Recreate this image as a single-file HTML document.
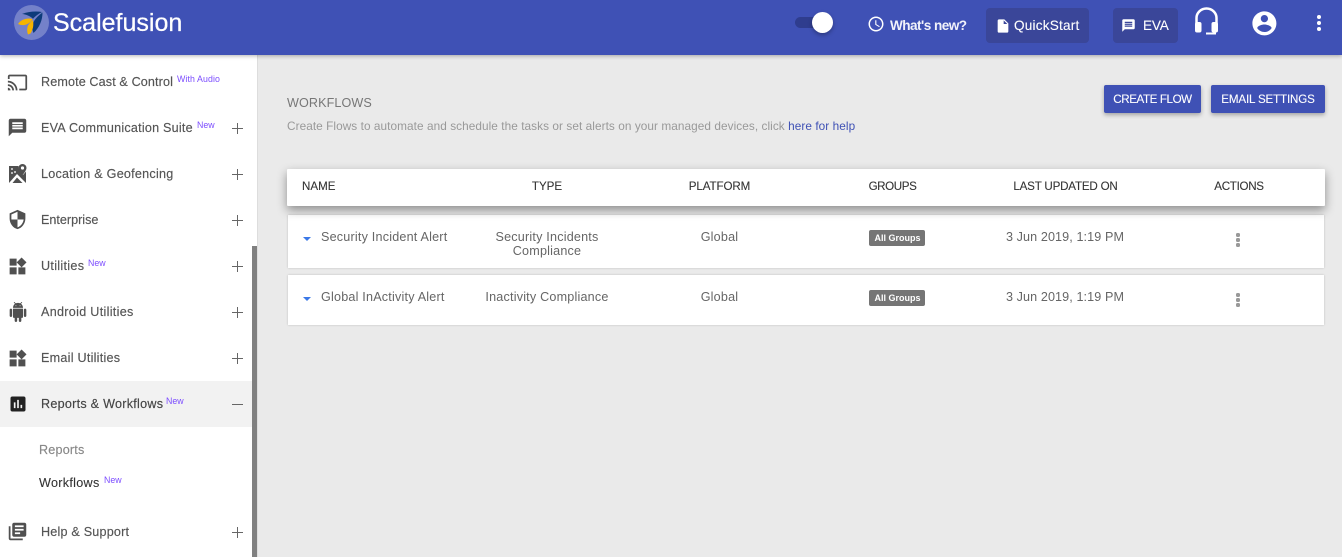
<!DOCTYPE html>
<html lang="en">
<head>
<meta charset="utf-8">
<title>Scalefusion Workflows</title>
<style>
*{box-sizing:border-box}
html,body{margin:0;padding:0}
body{width:1342px;height:557px;overflow:hidden;position:relative;background:#eaeaea;font-family:"Liberation Sans",sans-serif;color:#555}
.t{position:absolute;white-space:nowrap;line-height:16px}
svg{position:absolute;display:block}
#top{position:absolute;left:0;top:0;width:1342px;height:55px;background:#3f51b5;box-shadow:0 1px 4px rgba(0,0,0,.3);z-index:5}
#side{position:absolute;left:0;top:55px;width:258px;height:502px;background:#fff;border-right:1px solid #ddd}
#track{position:absolute;left:252px;top:246px;width:5px;height:311px;background:#808080;z-index:3}
.m{font-size:12.6px;color:#555;left:41px;-webkit-text-stroke:.15px #555}
.n{font-size:8.8px;color:#7c4dff}
.p{position:absolute;left:231.5px;width:11px;height:11px}
.p:before{content:"";position:absolute;left:0;top:5px;width:11px;height:1px;background:#666}
.p:after{content:"";position:absolute;left:5px;top:0;width:1px;height:11px;background:#666}
.p.min:after{display:none}
.dark{position:absolute;background:#3a4699;border-radius:4px}
.btn{position:absolute;top:85px;height:28px;background:#3f51b5;color:#fff;border-radius:2px;box-shadow:0 2px 4px rgba(0,0,0,.3);font-size:11.6px;line-height:29px;text-align:center;-webkit-text-stroke:.1px #fff}
.row{position:absolute;left:288px;width:1036px;background:#fff;box-shadow:0 0 2px rgba(0,0,0,.2)}
.h{font-size:11.6px;color:#333;top:179px;-webkit-text-stroke:.1px #333}
.c{font-size:12.6px;color:#666;text-align:center;letter-spacing:.2px}
.b{position:absolute;left:869px;width:56px;height:16px;padding-left:1px;background:#757575;border-radius:2px;color:#fff;font-size:9px;font-weight:700;line-height:16px;text-align:center}
.dot{position:absolute;left:1236px;width:4px;height:4px;border-radius:1.5px;background:#999}
.tri{position:absolute;left:303px;width:0;height:0;border-left:4.5px solid transparent;border-right:4.5px solid transparent;border-top:4px solid #3b78e7}
.i{fill:#505050}
</style>
</head>
<body>

<div id="side"></div>
<div style="position:absolute;left:0;top:381px;width:252px;height:46px;background:#f2f2f2"></div>
<div id="track"></div>

<div class="t m" style="top:74px;letter-spacing:.12px">Remote Cast &amp; Control</div>
<div class="t n" style="left:177px;top:71px;letter-spacing:.1px">With Audio</div>
<div class="t m" style="top:120px;letter-spacing:.22px">EVA Communication Suite</div>
<div class="t n" style="left:197px;top:117px">New</div>
<div class="t m" style="top:166px;letter-spacing:.24px">Location &amp; Geofencing</div>
<div class="t m" style="top:212px">Enterprise</div>
<div class="t m" style="top:258px;letter-spacing:.3px">Utilities</div>
<div class="t n" style="left:88px;top:255px">New</div>
<div class="t m" style="top:304px;letter-spacing:.3px">Android Utilities</div>
<div class="t m" style="top:350px;letter-spacing:.25px">Email Utilities</div>
<div class="t m" style="top:396px;color:#444;letter-spacing:.26px;-webkit-text-stroke:.15px #444">Reports &amp; Workflows</div>
<div class="t n" style="left:166px;top:393px">New</div>
<div class="t" style="left:39px;top:442px;font-size:12.6px;color:#888;letter-spacing:.2px;-webkit-text-stroke:.15px #888">Reports</div>
<div class="t" style="left:39px;top:475px;font-size:12.6px;color:#333;letter-spacing:.3px;-webkit-text-stroke:.1px #333">Workflows</div>
<div class="t n" style="left:104px;top:472px">New</div>
<div class="t m" style="top:524px;letter-spacing:.2px">Help &amp; Support</div>

<div class="p" style="top:123px"></div>
<div class="p" style="top:169px"></div>
<div class="p" style="top:215px"></div>
<div class="p" style="top:261px"></div>
<div class="p" style="top:307px"></div>
<div class="p" style="top:353px"></div>
<div class="p min" style="top:399px"></div>
<div class="p" style="top:527px"></div>

<!-- sidebar icons -->
<svg style="left:6.5px;top:71.5px" width="21" height="21" viewBox="0 0 24 24"><path class="i" d="M21 3H3c-1.100 0-2 .9-2 2v3h2V5h18v14h-7v2h7c1.100 0 2-.9 2-2V5c0-1.100-.9-2-2-2zM1 18v3h3c0-1.660-1.340-3-3-3zm0-4v2c2.760 0 5 2.240 5 5h2c0-3.870-3.130-7-7-7zm0-4v2c4.970 0 9 4.030 9 9h2c0-6.080-4.930-11-11-11z"/></svg>
<svg style="left:7px;top:116.500px" width="21" height="21" viewBox="0 0 24 24"><path class="i" d="M20 2H4c-1.100 0-1.990.9-1.990 2L2 22l4-4h14c1.100 0 2-.9 2-2V4c0-1.100-.9-2-2-2zm-2 12H6v-2h12v2zm0-3H6V9h12v2zm0-3H6V6h12v2z"/></svg>
<svg style="left:8px;top:164px" width="19" height="19" viewBox="0 0 19 19"><path class="i" d="M1 2h9.500a5 5 0 0 0 .8 3.500L15 11l3-3.500V19H1z"/><path fill="#fff" d="M1 19l8-9 9 9h-3.500L9 13.500 4.500 19z"/><path fill="#bbb" d="M3 4h2v2H3zM6 7h2v2H6zM3 8h2v2H3z"/><path class="i" d="M14.500 0A4 4 0 0 1 18.500 4c0 2.500-4 7-4 7s-4-4.500-4-7a4 4 0 0 1 4-4z"/><circle cx="14.500" cy="4" r="1.600" fill="#fff"/></svg>
<svg style="left:7px;top:209px" width="21" height="21" viewBox="0 0 24 24"><path class="i" d="M12 1L3 5v6c0 5.550 3.840 10.740 9 12 5.160-1.260 9-6.450 9-12V5l-9-4zm0 10.990h7c-.53 4.120-3.280 7.790-7 8.940V12H5V6.300l7-3.110v8.800z"/></svg>
<svg style="left:6.500px;top:255.500px" width="21" height="21" viewBox="0 0 24 24"><path class="i" d="M13 13v8h8v-8h-8zM3 21h8v-8H3v8zM3 3v8h8V3H3zm13.660-1.310L11 7.340 16.660 13l5.660-5.660-5.660-5.650z"/></svg>
<svg style="left:7.500px;top:301.500px" width="20" height="20" viewBox="0 0 24 24"><path class="i" d="M6 18c0 .55.45 1 1 1h1v3.500c0 .83.67 1.500 1.500 1.500s1.500-.67 1.500-1.500V19h2v3.500c0 .83.67 1.500 1.500 1.500s1.500-.67 1.500-1.500V19h1c.55 0 1-.45 1-1V8H6v10zM3.500 8C2.670 8 2 8.670 2 9.500v7c0 .83.67 1.500 1.500 1.500S5 17.330 5 16.500v-7C5 8.670 4.330 8 3.500 8zm17 0c-.83 0-1.500.67-1.500 1.500v7c0 .83.67 1.500 1.500 1.500s1.500-.67 1.500-1.500v-7c0-.83-.67-1.500-1.500-1.500zm-4.970-5.840l1.300-1.300c.2-.2.2-.51 0-.71-.2-.2-.51-.2-.71 0l-1.480 1.480C13.850 1.230 12.950 1 12 1c-.96 0-1.860.23-2.660.63L7.850.15c-.2-.2-.51-.2-.71 0-.2.2-.2.51 0 .71l1.310 1.310C6.970 3.260 6 5.010 6 7h12c0-1.990-.97-3.750-2.470-4.840zM10 5H9V4h1v1zm5 0h-1V4h1v1z"/></svg>
<svg style="left:6.500px;top:347.500px" width="21" height="21" viewBox="0 0 24 24"><path class="i" d="M13 13v8h8v-8h-8zM3 21h8v-8H3v8zM3 3v8h8V3H3zm13.660-1.310L11 7.340 16.660 13l5.660-5.660-5.660-5.650z"/></svg>
<svg style="left:7.500px;top:393.500px" width="20" height="20" viewBox="0 0 24 24"><path fill="#222" d="M19 3H5c-1.100 0-2 .9-2 2v14c0 1.100.9 2 2 2h14c1.100 0 2-.9 2-2V5c0-1.100-.9-2-2-2zM9 17H7v-7h2v7zm4 0h-2V7h2v10zm4 0h-2v-4h2v4z"/></svg>
<svg style="left:6.750px;top:521px" width="21" height="21" viewBox="0 0 24 24"><path class="i" d="M4 6H2v14c0 1.100.9 2 2 2h14v-2H4V6zm16-4H8c-1.100 0-2 .9-2 2v12c0 1.100.9 2 2 2h12c1.100 0 2-.9 2-2V4c0-1.100-.9-2-2-2zm-1 9H9V9h10v2zm-4 4H9v-2h6v2zm4-8H9V5h10v2z"/></svg>

<!-- top bar -->
<div id="top">
  <svg style="left:14px;top:5px" width="35" height="35" viewBox="0 0 35 35"><circle cx="17.500" cy="17.500" r="17.500" fill="#7481c9"/><path fill="#0d3b7a" d="M8 9C14 6.500 22 6 28 7c-3.500 1.800-6.500 4-9 6.800C16 11 12 9.300 8 9z"/><path fill="#0d3b7a" d="M28.500 7.500c0 7.500-3 15-9 20.500-1.600-3.500-1.600-7.500 0-11 2-3.800 5.500-7 9-9.500z"/><path fill="#f5b400" d="M4 19c3-4.500 9-6.500 14.500-5-2.200 4.500-8 8-14.500 5z"/><path fill="#f5b400" d="M18.800 15c1.200 4.500.3 9.500-2.300 13.500l-2.500 1c-1-2.500-1.200-6 0-9 1.200-2 3-4 4.800-5.500z"/></svg>
  <div class="t" style="left:53px;top:8px;font-size:25px;line-height:30px;color:#fff;-webkit-text-stroke:.25px #fff">Scalefusion</div>

  <div style="position:absolute;left:795px;top:17px;width:30px;height:11px;border-radius:6px;background:#2f3d8e"></div>
  <div style="position:absolute;left:812px;top:12px;width:21px;height:21px;border-radius:50%;background:#fff;box-shadow:0 2px 4px rgba(0,0,0,.3)"></div>

  <svg style="left:866.500px;top:14.500px" width="18" height="18" viewBox="0 0 24 24"><path fill="#fff" d="M11.990 2C6.470 2 2 6.480 2 12s4.470 10 9.990 10C17.520 22 22 17.520 22 12S17.520 2 11.990 2zM12 20c-4.420 0-8-3.580-8-8s3.580-8 8-8 8 3.580 8 8-3.580 8-8 8zm.5-13H11v6l5.250 3.150.75-1.230-4.500-2.670z"/></svg>
  <div class="t" style="left:890px;top:18px;font-size:13.600px;font-weight:700;color:#f1f2fa;letter-spacing:-.55px">What's new?</div>

  <div class="dark" style="left:986px;top:8px;width:103px;height:35px"></div>
  <svg style="left:994.500px;top:17.500px" width="16" height="16" viewBox="0 0 24 24"><path fill="#fff" d="M6 2c-1.100 0-1.990.9-1.990 2L4 20c0 1.100.89 2 1.990 2H18c1.100 0 2-.9 2-2V8l-6-6H6zm7 7V3.500L18.500 9H13z"/></svg>
  <div class="t" style="left:1014px;top:18px;font-size:13.600px;color:#fff;letter-spacing:.2px;-webkit-text-stroke:.1px #fff">QuickStart</div>

  <div class="dark" style="left:1113px;top:8px;width:65px;height:35px"></div>
  <svg style="left:1121px;top:18px" width="15" height="15" viewBox="0 0 24 24"><path fill="#fff" d="M20 2H4c-1.100 0-1.990.9-1.990 2L2 22l4-4h14c1.100 0 2-.9 2-2V4c0-1.100-.9-2-2-2zm-2 12H6v-2h12v2zm0-3H6V9h12v2zm0-3H6V6h12v2z"/></svg>
  <div class="t" style="left:1143px;top:18px;font-size:13.600px;color:#fff;letter-spacing:-.2px;-webkit-text-stroke:.1px #fff">EVA</div>

  <svg style="left:1192px;top:7px" width="28" height="29" viewBox="0 0 28 29"><path fill="none" stroke="#fff" stroke-width="2.500" d="M4.500 16V11a10 9.500 0 0 1 20 0v5"/><rect x="3" y="15" width="6.500" height="10.500" rx="2" fill="#fff"/><rect x="19.500" y="15" width="6.500" height="10.500" rx="2" fill="#fff"/><path fill="#fff" d="M14 25.500h10v2H14z"/></svg>

  <svg style="left:1249.600px;top:9px" width="28.800" height="28.800" viewBox="0 0 24 24"><path fill="#fff" d="M12 2C6.480 2 2 6.480 2 12s4.480 10 10 10 10-4.480 10-10S17.520 2 12 2zm0 3c1.660 0 3 1.340 3 3s-1.340 3-3 3-3-1.340-3-3 1.340-3 3-3zm0 14.200c-2.500 0-4.710-1.280-6-3.220.03-1.990 4-3.080 6-3.080 1.990 0 5.970 1.090 6 3.080-1.290 1.940-3.500 3.220-6 3.220z"/></svg>

  <svg style="left:1315.500px;top:14px" width="6" height="18" viewBox="0 0 6 18"><circle cx="3" cy="3" r="2" fill="#fff"/><circle cx="3" cy="9" r="2" fill="#fff"/><circle cx="3" cy="15" r="2" fill="#fff"/></svg>
</div>

<!-- content header -->
<div class="t" style="left:287px;top:95px;font-size:12.600px;color:#777;letter-spacing:.1px">WORKFLOWS</div>
<div class="t" style="left:287px;top:118px;font-size:11.800px;color:#999;letter-spacing:.065px">Create Flows to automate and schedule the tasks or set alerts on your managed devices, click <span style="color:#3f51b5">here for help</span></div>
<div class="btn" style="left:1104px;width:97px;letter-spacing:-.4px">CREATE FLOW</div>
<div class="btn" style="left:1211px;width:114px;letter-spacing:-.15px">EMAIL SETTINGS</div>

<!-- table -->
<div class="row" style="left:287px;top:169px;width:1038px;height:37px;border-radius:1px;box-shadow:0 4px 10px rgba(0,0,0,.4);z-index:2"></div>
<div class="t h" style="left:302px;z-index:3">NAME</div>
<div class="t h" style="left:447px;width:200px;text-align:center;z-index:3">TYPE</div>
<div class="t h" style="left:620px;width:199px;text-align:center;z-index:3;letter-spacing:-.1px">PLATFORM</div>
<div class="t h" style="left:792.500px;width:200px;text-align:center;z-index:3;letter-spacing:-.4px">GROUPS</div>
<div class="t h" style="left:965.500px;width:200px;text-align:center;z-index:3;letter-spacing:-.2px">LAST UPDATED ON</div>
<div class="t h" style="left:1139px;width:200px;text-align:center;z-index:3;letter-spacing:-.3px">ACTIONS</div>

<div class="row" style="top:215px;height:53px"></div>
<div class="row" style="top:275px;height:50px"></div>

<div class="tri" style="top:237px"></div>
<div class="t c" style="left:321px;top:229px">Security Incident Alert</div>
<div class="t c" style="left:447px;width:200px;top:230px;line-height:14px">Security Incidents<br>Compliance</div>
<div class="t c" style="left:620px;width:199px;top:229px">Global</div>
<div class="b" style="top:230px">All Groups</div>
<div class="t c" style="left:965px;width:200px;top:229px;letter-spacing:.1px">3 Jun 2019, 1:19 PM</div>
<div class="dot" style="top:233px"></div><div class="dot" style="top:238px"></div><div class="dot" style="top:243px"></div>

<div class="tri" style="top:297px"></div>
<div class="t c" style="left:321px;top:289px">Global InActivity Alert</div>
<div class="t c" style="left:447px;width:200px;top:289px">Inactivity Compliance</div>
<div class="t c" style="left:620px;width:199px;top:289px">Global</div>
<div class="b" style="top:290px">All Groups</div>
<div class="t c" style="left:965px;width:200px;top:289px;letter-spacing:.1px">3 Jun 2019, 1:19 PM</div>
<div class="dot" style="top:293px"></div><div class="dot" style="top:298px"></div><div class="dot" style="top:303px"></div>

</body>
</html>
